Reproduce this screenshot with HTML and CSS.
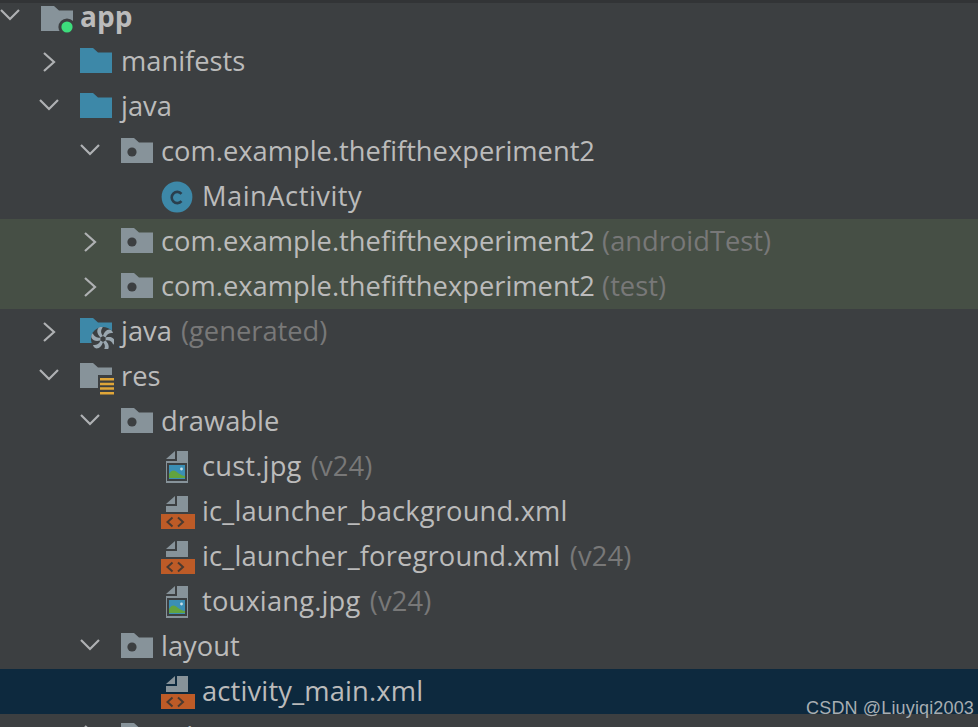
FILE: index.html
```html
<!DOCTYPE html>
<html lang="en">
<head>
<meta charset="utf-8">
<title>Project tree</title>
<link rel="stylesheet" href="styles.css">
</head>
<body>
<svg class="defs" aria-hidden="true">
  <symbol id="chev-down" viewBox="0 0 20 20"><path d="M1 3 L10 12 L19 3" fill="none" stroke="#afb1b3" stroke-width="2.2"/></symbol>
  <symbol id="chev-right" viewBox="0 0 20 20"><path d="M5 1 L15 10 L5 19" fill="none" stroke="#afb1b3" stroke-width="2.2"/></symbol>
  <symbol id="folder" viewBox="0 0 36 36"><path d="M2 5 H15 L20 9.5 H34 V30 H2 Z" fill="#3d88a8"/></symbol>
  <symbol id="package" viewBox="0 0 36 36"><path d="M2 5 H15 L20 9.5 H34 V30 H2 Z" fill="#87939a"/><circle cx="13" cy="19" r="4.6" fill="#3c3f41"/></symbol>
  <symbol id="module" viewBox="0 0 36 36"><path d="M2 8 H15 L20 12.5 H34 V33 H2 Z" fill="#87939a"/><circle cx="28" cy="29" r="8.6" fill="#3c3f41"/><circle cx="28" cy="29" r="5.6" fill="#3ddc7c"/></symbol>
  <symbol id="class" viewBox="0 0 36 36"><circle cx="17" cy="19" r="15.4" fill="#3d88a8"/><path d="M21.5 15.8 A5.6 5.6 0 1 0 21.5 23.2" fill="none" stroke="#2a3f4e" stroke-width="2.6"/></symbol>
  <symbol id="generated" viewBox="0 0 36 36">
    <path d="M2 5 H15 L20 9.5 H34 V30 H2 Z" fill="#3d88a8"/>
    <circle cx="25" cy="26" r="12" fill="#3c3f41"/>
    <g fill="#9aa7b0" transform="translate(25 26)">
      <path d="M0 -3 C1 -6.5 3 -9.5 6.5 -9.5 C8.5 -9 9.5 -8 10 -6 C7 -6.5 4 -5.5 2.6 -1.5 Z"/>
      <path d="M0 -3 C1 -6.5 3 -9.5 6.5 -9.5 C8.5 -9 9.5 -8 10 -6 C7 -6.5 4 -5.5 2.6 -1.5 Z" transform="rotate(60)"/>
      <path d="M0 -3 C1 -6.5 3 -9.5 6.5 -9.5 C8.5 -9 9.5 -8 10 -6 C7 -6.5 4 -5.5 2.6 -1.5 Z" transform="rotate(120)"/>
      <path d="M0 -3 C1 -6.5 3 -9.5 6.5 -9.5 C8.5 -9 9.5 -8 10 -6 C7 -6.5 4 -5.5 2.6 -1.5 Z" transform="rotate(180)"/>
      <path d="M0 -3 C1 -6.5 3 -9.5 6.5 -9.5 C8.5 -9 9.5 -8 10 -6 C7 -6.5 4 -5.5 2.6 -1.5 Z" transform="rotate(240)"/>
      <path d="M0 -3 C1 -6.5 3 -9.5 6.5 -9.5 C8.5 -9 9.5 -8 10 -6 C7 -6.5 4 -5.5 2.6 -1.5 Z" transform="rotate(300)"/>
    </g>
  </symbol>
  <symbol id="res" viewBox="0 0 36 36" overflow="visible">
    <path d="M2 5 H15 L20 9.5 H34 V30 H2 Z" fill="#87939a"/>
    <path d="M20 17 H37 V38 H20 Z" fill="#3c3f41"/>
    <path d="M22 20 H36 V22.5 H22 Z M22 24.7 H36 V27.2 H22 Z M22 29.3 H36 V31.8 H22 Z M22 34 H36 V36.5 H22 Z" fill="#e0a638"/>
  </symbol>
  <symbol id="image" viewBox="0 0 36 36">
    <path d="M6 11 L15 3 V11 Z M17 3 H28 V35 H6 V13 H17 Z" fill="#87939a"/>
    <rect x="7" y="15" width="20" height="18" fill="#3c3f41"/>
    <rect x="9" y="17" width="16" height="14" fill="#3b8fb5"/>
    <path d="M9 26 C12 21 15 22 18 25 C21 27 23 28 25 28 V30 H9 Z" fill="#62a33f"/>
    <circle cx="21.5" cy="21" r="1.4" fill="#c9dfe8"/>
  </symbol>
  <symbol id="xml" viewBox="0 0 36 36">
    <path d="M6 11 L15 3 V11 Z M17 3 H28 V19 H6 V13 H17 Z" fill="#87939a"/>
    <rect x="1" y="21" width="34" height="15" fill="#bd5b27"/>
    <path d="M12.5 24.5 L7.5 29 L12.5 33.5 M18 24.5 L23 29 L18 33.5" fill="none" stroke="#4a3a30" stroke-width="2"/>
  </symbol>
</svg>

<main class="page">
  <div class="topline"></div>
  <ul class="tree">
    <li class="row l0"><svg class="chev"><use href="#chev-down"/></svg><svg class="icon"><use href="#module"/></svg><span class="label bold">app</span></li>
    <li class="row l1"><svg class="chev"><use href="#chev-right"/></svg><svg class="icon"><use href="#folder"/></svg><span class="label">manifests</span></li>
    <li class="row l1"><svg class="chev"><use href="#chev-down"/></svg><svg class="icon"><use href="#folder"/></svg><span class="label">java</span></li>
    <li class="row l2"><svg class="chev"><use href="#chev-down"/></svg><svg class="icon"><use href="#package"/></svg><span class="label">com.example.thefifthexperiment2</span></li>
    <li class="row l3"><svg class="icon"><use href="#class"/></svg><span class="label wide">MainActivity</span></li>
    <li class="row l2 tested"><svg class="chev"><use href="#chev-right"/></svg><svg class="icon"><use href="#package"/></svg><span class="label">com.example.thefifthexperiment2 <span class="muted">(androidTest)</span></span></li>
    <li class="row l2 tested"><svg class="chev"><use href="#chev-right"/></svg><svg class="icon"><use href="#package"/></svg><span class="label">com.example.thefifthexperiment2 <span class="muted">(test)</span></span></li>
    <li class="row l1"><svg class="chev"><use href="#chev-right"/></svg><svg class="icon"><use href="#generated"/></svg><span class="label">java <span class="muted">(generated)</span></span></li>
    <li class="row l1"><svg class="chev"><use href="#chev-down"/></svg><svg class="icon"><use href="#res"/></svg><span class="label">res</span></li>
    <li class="row l2"><svg class="chev"><use href="#chev-down"/></svg><svg class="icon"><use href="#package"/></svg><span class="label">drawable</span></li>
    <li class="row l3"><svg class="icon"><use href="#image"/></svg><span class="label">cust.jpg <span class="muted">(v24)</span></span></li>
    <li class="row l3"><svg class="icon"><use href="#xml"/></svg><span class="label">ic_launcher_background.xml</span></li>
    <li class="row l3"><svg class="icon"><use href="#xml"/></svg><span class="label">ic_launcher_foreground.xml <span class="muted">(v24)</span></span></li>
    <li class="row l3"><svg class="icon"><use href="#image"/></svg><span class="label">touxiang.jpg <span class="muted">(v24)</span></span></li>
    <li class="row l2"><svg class="chev"><use href="#chev-down"/></svg><svg class="icon"><use href="#package"/></svg><span class="label">layout</span></li>
    <li class="row l3 selected"><svg class="icon"><use href="#xml"/></svg><span class="label">activity_main.xml</span></li>
    <li class="row l2 last"><svg class="chev"><use href="#chev-right"/></svg><svg class="icon"><use href="#package"/></svg><span class="label">mipmap</span></li>
  </ul>
  <div class="watermark">CSDN @Liuyiqi2003</div>
</main>
</body>
</html>
```

FILE: styles.css
```css
html, body {
  margin: 0;
  padding: 0;
  background: #3c3f41;
}

.defs {
  position: absolute;
  width: 0;
  height: 0;
}

.page {
  position: relative;
  width: 978px;
  height: 727px;
  overflow: hidden;
  background: #3c3f41;
  font-family: "Open Sans", "Noto Sans", sans-serif;
  font-size: 27.3px;
  color: #bbbbbb;
}

.topline {
  position: absolute;
  top: 0;
  left: 0;
  right: 0;
  height: 3px;
  background: #323436;
  z-index: 1;
}

.tree {
  list-style: none;
  margin: -6px 0 0;
  padding: 0;
}

.row {
  display: flex;
  align-items: flex-start;
  height: 45px;
  line-height: 43px;
  white-space: nowrap;
}

.l0 { padding-left: 0; }
.l1 { padding-left: 39px; }
.l2 { padding-left: 80px; }
.l3 { padding-left: 160px; }

.chev {
  flex: none;
  width: 20px;
  height: 20px;
  margin: 13px 19px 0 0;
}

.last .chev { margin-top: 11px; }

.icon {
  flex: none;
  width: 36px;
  height: 36px;
  margin: 4px 6px 0 0;
  overflow: visible;
}

.l1 .label { margin-left: 1px; }
.l0 .label { margin: 1px 0 0 -1px; font-size: 28px; }
.l3 .label { letter-spacing: 0.17px; }
.l3 .wide { letter-spacing: 0.5px; }
.l1 .muted, .l3 .muted { margin-left: 2px; }

.bold { font-weight: 700; }
.muted { color: #787878; }

.tested { background: #464f45; }
.selected { background: #0d293e; }

.watermark {
  position: absolute;
  right: 4px;
  top: 697px;
  font-family: "Liberation Sans", Arial, sans-serif;
  font-size: 18px;
  letter-spacing: 0.15px;
  line-height: 22px;
  color: #a8aeb2;
}
```
